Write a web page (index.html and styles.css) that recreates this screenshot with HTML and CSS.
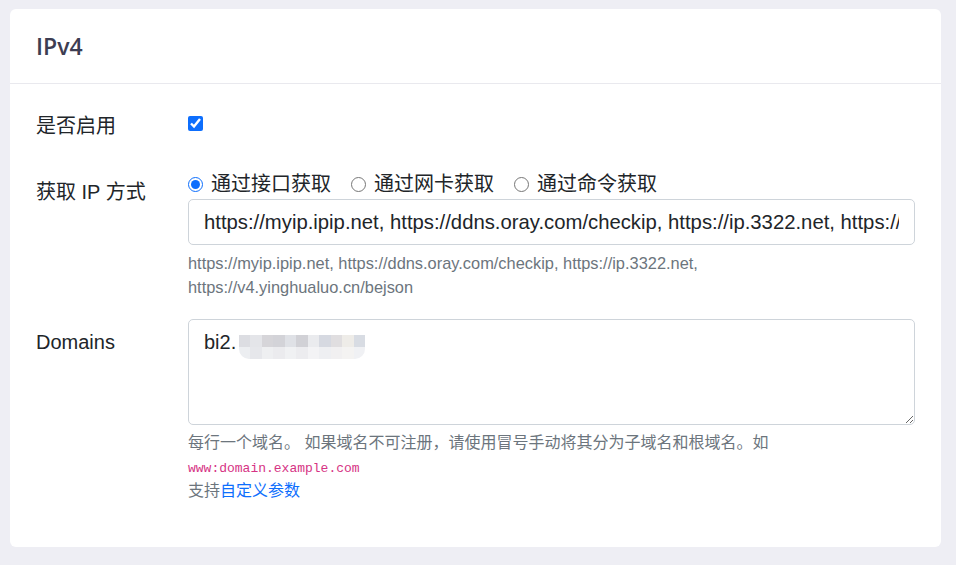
FILE: index.html
```html
<!doctype html>
<html lang="zh-CN">
<head>
  <meta charset="utf-8">
  <title>DDNS 设置 - IPv4</title>
  <link rel="stylesheet" href="styles.css">
</head>
<body>

<div class="card">
  <div class="card-header">IPv4</div>
  <div class="card-body">

    <div class="row">
      <label class="row-label" for="ipv4-enable">是否启用</label>
      <div class="row-field">
        <input type="checkbox" id="ipv4-enable" class="check check-enable" checked>
      </div>
    </div>

    <div class="row">
      <label class="row-label">获取 IP 方式</label>
      <div class="row-field">
        <div class="radios">
          <label class="radio"><input type="radio" class="check" name="ipv4-type" checked>通过接口获取</label>
          <label class="radio"><input type="radio" class="check" name="ipv4-type">通过网卡获取</label>
          <label class="radio"><input type="radio" class="check" name="ipv4-type">通过命令获取</label>
        </div>
        <input type="text" class="control url-input" value="https://myip.ipip.net, https://ddns.oray.com/checkip, https://ip.3322.net, https://v4.yinghualuo.cn/bejson">
        <div class="help help-urls">https://myip.ipip.net, https://ddns.oray.com/checkip, https://ip.3322.net, https://v4.yinghualuo.cn/bejson</div>
      </div>
    </div>

    <div class="row">
      <label class="row-label" for="ipv4-domains">Domains</label>
      <div class="row-field">
        <div class="domains-box">
          <textarea id="ipv4-domains" class="control domains">bi2.</textarea>
          <!-- hidden part of the domain -->
          <div class="mosaic">
            <i style="background:#dcdde2"></i><i style="background:#e4e5e9"></i><i style="background:#d6d5d9"></i><i style="background:#d3d3d8"></i><i style="background:#dfe1e6"></i><i style="background:#d1d1d6"></i><i style="background:#eaebee"></i><i style="background:#d6d9e1"></i><i style="background:#e0dee0"></i><i style="background:#eeece8"></i><i style="background:#d8dce3"></i>
            <i style="background:#eceef1"></i><i style="background:#e6e7eb"></i><i style="background:#eeeff1"></i><i style="background:#ebebee"></i><i style="background:#f0f1f3"></i><i style="background:#ececef"></i><i style="background:#f3f3f5"></i><i style="background:#eeeff2"></i><i style="background:#f1f0f1"></i><i style="background:#f4f3f2"></i><i style="background:#f0f1f4"></i>
          </div>
        </div>
        <div class="help">每行一个域名。 如果域名不可注册，请使用冒号手动将其分为子域名和根域名。如 <code>www:domain.example.com</code><br>支持<a href="#" class="link">自定义参数</a></div>
      </div>
    </div>

  </div>
</div>

</body>
</html>
```

FILE: styles.css
```css
body {
  margin: 0;
  padding: 9px 15px 17px 10px;
  background: #eeeef4;
  font: normal 20px "Liberation Sans", Arial, "Noto Sans CJK SC", sans-serif;
  color: #212529;
}

.card {
  background: white;
  border-radius: 6px;
}
.card-header {
  padding: 22px 26px;
  font: 600 23px/30px "Open Sans", "Liberation Sans", sans-serif;
  color: #3d3d52;
  border-bottom: 1px solid #e9e9ee;
}
.card-body {
  padding: 19px 26px 44px;
}

.row {
  display: grid;
  grid-template-columns: 152px 1fr;
  margin-bottom: 20px;
}
.row:last-child { margin-bottom: 0; }
.row-label {
  padding: 8px 0;
  line-height: 30px;
}

.check {
  width: 15px;
  height: 15px;
  margin: 0;
  accent-color: #0d6efd;
}
.check-enable { margin-top: 13px; }

.radios {
  display: flex;
  align-items: center;
  height: 30px;
}
.radio {
  display: flex;
  align-items: center;
  gap: 8px;
  margin-right: 20px;
  line-height: 30px;
}

.control {
  display: block;
  box-sizing: border-box;
  width: 100%;
  height: 46px;
  padding: 7px 15px;
  font: inherit;
  line-height: 30px;
  color: #212529;
  border: 1px solid #ced4da;
  border-radius: 5px;
  background: white;
}
.url-input { font-size: 20.3px; }
.domains {
  height: 106px;
  resize: vertical;
}
.domains-box { position: relative; }
.mosaic {
  position: absolute;
  left: 51px;
  top: 16px;
  width: 126px;
  height: 24px;
  display: grid;
  grid-template-columns: repeat(11, 1fr);
  border-radius: 0 0 10px 10px;
  overflow: hidden;
  filter: blur(0.4px);
}

.help {
  margin-top: 6px;
  font-size: 16px;
  line-height: 24px;
  color: #6c757d;
}
.help-urls { font-size: 16.4px; }
.help code {
  font: 13px "Liberation Mono", "DejaVu Sans Mono", monospace;
  color: #d63384;
}
.link {
  color: #0d6efd;
  text-decoration: none;
}
```
